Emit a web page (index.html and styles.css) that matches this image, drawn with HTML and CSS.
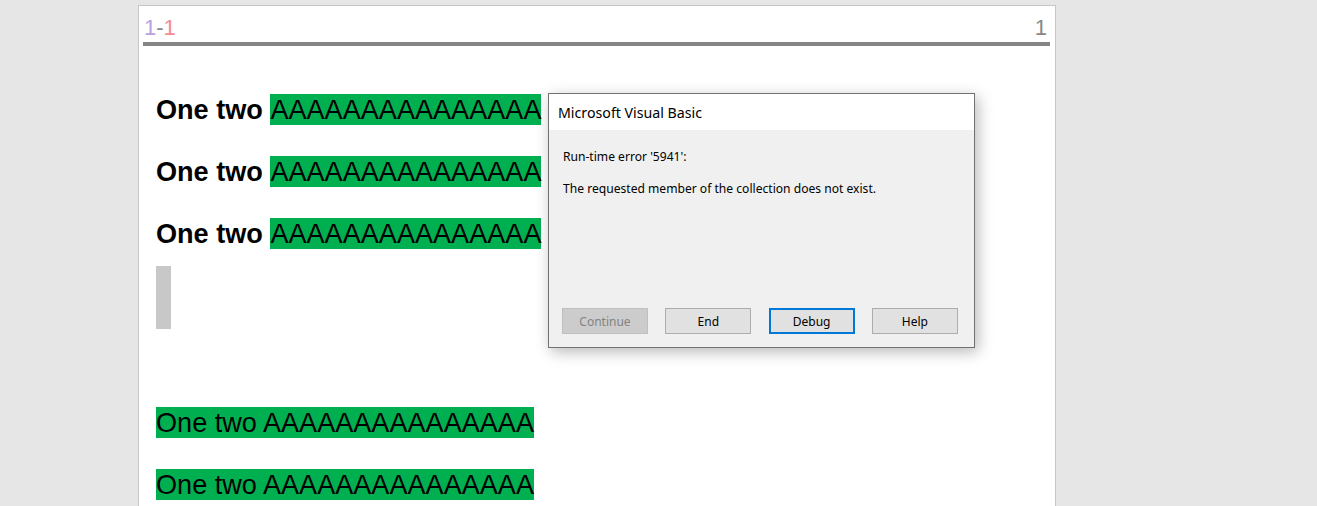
FILE: index.html
```html
<!DOCTYPE html>
<html lang="en">
<head>
    <meta charset="UTF-8">
    <title>Document - Run-time error</title>
    <link rel="stylesheet" href="styles.css">
</head>
<body>
    <div class="page">
        <div class="page-header">
            <span class="section"><span class="sec-a">1</span>-<span class="sec-b">1</span></span>
            <span class="page-num">1</span>
        </div>

        <div class="content">
            <p class="line line-first"><b>One two </b><span class="mark">AAAAAAAAAAAAAAA</span></p>
            <p class="line"><b>One two </b><span class="mark">AAAAAAAAAAAAAAA</span></p>
            <p class="line"><b>One two </b><span class="mark">AAAAAAAAAAAAAAA</span></p>
            <div class="empty-para"></div>
            <p class="line line-after"><span class="mark">One two AAAAAAAAAAAAAAA</span></p>
            <p class="line"><span class="mark">One two AAAAAAAAAAAAAAA</span></p>
        </div>
    </div>

    <div class="dialog">
        <div class="dialog-title">Microsoft Visual Basic</div>
        <div class="dialog-body">
            <p class="msg">Run-time error '5941':</p>
            <p class="msg">The requested member of the collection does not exist.</p>
            <div class="buttons">
                <button class="btn" disabled>Continue</button>
                <button class="btn">End</button>
                <button class="btn btn-default">Debug</button>
                <button class="btn">Help</button>
            </div>
        </div>
    </div>
</body>
</html>
```

FILE: styles.css
```css
html, body {
    margin: 0;
    padding: 0;
    height: 100%;
}
body {
    background: #e6e6e6;
    overflow: hidden;
    font-family: "Liberation Sans", Arial, sans-serif;
}
.page {
    box-sizing: border-box;
    width: 918px;
    height: 560px;
    margin: 5px 0 0 138px;
    padding: 9px 5px 0 4px;
    background: #fff;
    border: 1px solid #c6c6c6;
}
.page-header {
    display: flex;
    justify-content: space-between;
    padding: 0 3px 2px 1px;
    font-size: 22px;
    line-height: 25px;
    color: #888;
    border-bottom: 4px solid #858585;
}
.sec-a {
    color: #b9a0dc;
}
.sec-b {
    color: #f68a8e;
}
.content {
    display: flex;
    flex-direction: column;
    padding-left: 13px;
    font-size: 27.1px;
}
.line {
    margin: 31px 0 0 0;
    height: 31px;
    line-height: 31px;
    white-space: nowrap;
    color: #000;
}
.line-first {
    margin-top: 47.5px;
}
.line-after {
    margin-top: 78px;
}
.mark {
    background: #00b050;
}
.empty-para {
    width: 15px;
    height: 63px;
    margin: 17px 0 0 0;
    background: #c8c8c8;
}

.dialog {
    position: absolute;
    left: 548px;
    top: 93px;
    box-sizing: border-box;
    width: 427px;
    height: 255px;
    display: flex;
    flex-direction: column;
    border: 1px solid #727272;
    background: #f0f0f0;
    box-shadow: 3px 4px 14px rgba(0,0,0,0.28);
    font-family: "Noto Sans", "Open Sans", sans-serif;
}
.dialog-title {
    height: 36px;
    line-height: 38px;
    padding-left: 9px;
    background: #fff;
    font-size: 14.2px;
    color: #000;
}
.dialog-body {
    flex: 1;
    display: flex;
    flex-direction: column;
    padding: 19px 13px 13px 13px;
}
.msg {
    margin: 0 0 16px 1px;
    font-size: 12.1px;
    line-height: 16px;
    color: #000;
}
.buttons {
    margin-top: auto;
    display: flex;
    gap: 17.3px;
}
.btn {
    box-sizing: border-box;
    width: 86px;
    height: 26px;
    padding: 0;
    font-family: "Noto Sans", "Open Sans", sans-serif;
    font-size: 12px;
    color: #000;
    background: #e1e1e1;
    border: 1px solid #adadad;
}
.btn:disabled {
    background: #cccccc;
    border-color: #bfbfbf;
    color: #838383;
}
.btn-default {
    border: 2px solid #0078d7;
}
```
